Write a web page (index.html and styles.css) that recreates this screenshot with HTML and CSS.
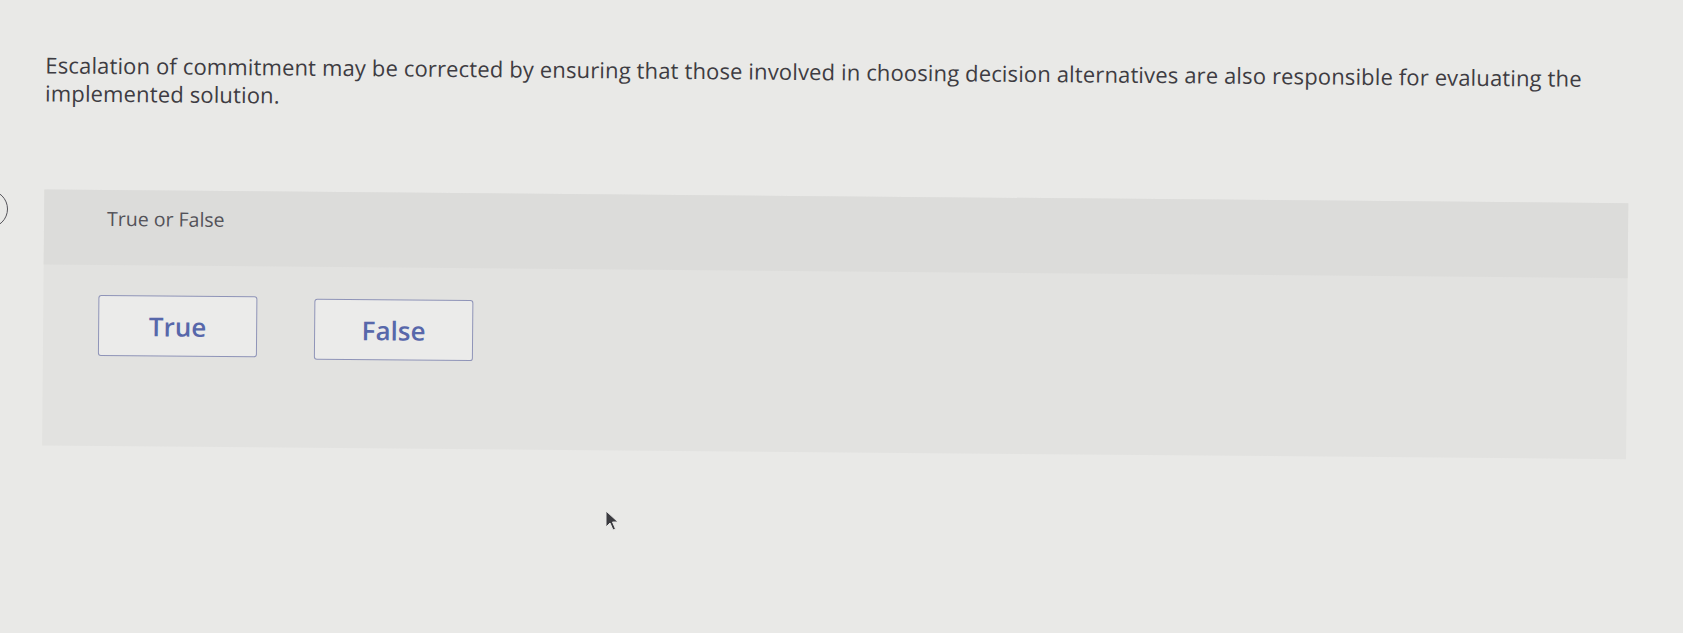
FILE: index.html
```html
<!DOCTYPE html>
<html lang="en">
<head>
  <meta charset="UTF-8">
  <title>True or False</title>
  <link rel="stylesheet" href="styles.css">
</head>
<body>
  <div class="pagina">
    <p class="pregunta">Escalation of commitment may be corrected by ensuring that those involved in choosing decision alternatives are also responsible for evaluating the implemented solution.</p>

    <div class="bloque">
      <div class="bloque-titulo">True or False</div>
      <div class="opciones">
        <button class="opcion">True</button>
        <button class="opcion opcion-baja">False</button>
      </div>
    </div>
  </div>

  <span class="borde-lateral"></span>

  <svg class="cursor" width="14" height="22" viewBox="0 0 14 22">
    <path d="M1 1 L1 17 L5 13 L8 20 L10.5 19 L7.5 12 L13 12 Z" fill="#3b3b40" stroke="#e8e8e6" stroke-width="1"/>
  </svg>
</body>
</html>
```

FILE: styles.css
```css
body {
  margin: 0;
  background: #e9e9e7;
  font-family: 'Open Sans', 'Liberation Sans', sans-serif;
  height: 633px;
  overflow: hidden;
}

.pagina {
  padding: 50px 53px 0 46px;
  transform: rotate(0.5deg);
  transform-origin: 0 0;
}

.pregunta {
  margin: 0;
  max-width: 1575px;
  font-size: 22px;
  line-height: 28px;
  letter-spacing: 0.14px;
  color: #3e3c42;
}

.bloque {
  margin-top: 83px;
  background: #e2e2e0;
  padding-bottom: 88px;
}

.bloque-titulo {
  background: #dcdcda;
  height: 75px;
  box-sizing: border-box;
  padding: 16px 0 0 63px;
  font-size: 19.5px;
  line-height: 26px;
  color: #535258;
}

.opciones {
  display: flex;
  gap: 57px;
  padding: 30px 0 0 55px;
}

.opcion {
  width: 159px;
  height: 61px;
  background: #ebebea;
  border: 1.5px solid #8f94b8;
  border-radius: 3px;
  font-family: inherit;
  font-size: 26px;
  font-weight: 600;
  color: #5767aa;
  cursor: pointer;
}

.opcion-baja {
  margin-top: 2px;
}

/* arco de un control que queda fuera de la vista */
.borde-lateral {
  position: absolute;
  left: -30px;
  top: 190px;
  width: 36px;
  height: 36px;
  border: 1.5px solid #55545a;
  border-radius: 50%;
}

.cursor {
  position: absolute;
  left: 605px;
  top: 510px;
}
```
